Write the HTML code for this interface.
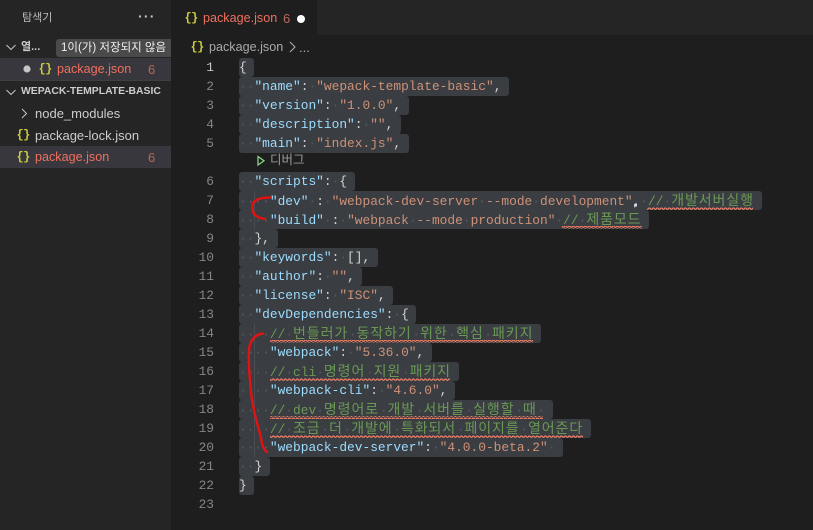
<!DOCTYPE html>
<html lang="ko"><head><meta charset="utf-8"><title>package.json</title>
<style>
html,body{margin:0;padding:0;width:813px;height:530px;overflow:hidden;background:#1e1e1e}
body{position:relative;font-family:"Liberation Sans","Noto Sans CJK KR",sans-serif;font-size:13px;color:#cccccc}
.a{position:absolute;white-space:nowrap}
.rect{position:absolute}
.ic{position:absolute;font:bold 12px/14px "Liberation Mono",monospace;color:#cbcb41;white-space:pre;letter-spacing:-.6px}
.err{color:#f0705f}
.pk{font-size:12.6px}
.num{color:#b8685a}
.ln{position:absolute;width:30px;left:184px;text-align:right;font:12.87px/19px "Liberation Mono",monospace;color:#858585}
.l{position:absolute;left:239px;height:19px;font:12.87px/19px "Liberation Mono","Noto Sans CJK KR",monospace;white-space:pre;color:#d4d4d4}
.l>span.s{display:inline-block;height:19px;background:#3a3d41;padding-right:7.7px;border-radius:3px;vertical-align:top}
i{font-style:normal;color:#565a5f}
b{font-weight:normal;color:#9cdcfe}
u{text-decoration:none;color:#ce9178}
em{font-style:normal;color:#6a9955}
.k{font-family:"Noto Sans CJK KR",sans-serif;font-size:14px;letter-spacing:.9px;line-height:19px}
.k+i{margin-left:.7px}
</style></head><body>
<div class="rect" style="left:0;top:0;width:171px;height:530px;background:#252526"></div>
<div class="rect" style="left:171px;top:0;width:642px;height:35px;background:#252526"></div>
<div class="rect" style="left:171px;top:0;width:146px;height:35px;background:#1e1e1e"></div>

<div class="a" style="left:22px;top:10px;font-size:11px;line-height:16px;color:#bbbbbb">탐색기</div>
<div class="a" style="left:138px;top:6px;font-size:14px;line-height:20px;color:#c5c5c5;letter-spacing:1.2px;font-weight:bold">···</div>

<div class="rect" style="left:0;top:58px;width:171px;height:22px;background:#37373d"></div>
<div class="rect" style="left:0;top:80px;width:171px;height:1px;background:#3f3f42"></div>
<div class="rect" style="left:0;top:146px;width:171px;height:22px;background:#37373d"></div>

<svg class="rect" style="left:0;top:0" width="171" height="170" fill="none" stroke="#c5c5c5" stroke-width="1">
<path d="M6.500 45l4.500 4.500 4.500-4.500"/>
<path d="M6.500 90l4.500 4.500 4.500-4.500"/>
<path d="M22 109l4.500 4.500-4.500 4.500"/>
<circle cx="27" cy="69" r="3.600" fill="#c5c5c5" stroke="none"/>
</svg>

<div class="a" style="left:21px;top:39px;font-size:11px;font-weight:bold;line-height:16px;color:#cccccc">열...</div>
<div class="rect" style="left:56px;top:39px;width:115px;height:18px;background:#4a4a4b;border-radius:3px 0 0 3px"></div>
<div class="a" style="left:61px;top:40px;font-size:11.5px;line-height:16px;color:#f0f0f0">1이(가) 저장되지 않음</div>

<div class="ic" style="left:38.500px;top:62px">{}</div>
<div class="a err pk" style="left:57px;top:61px;line-height:17px">package.json</div>
<div class="a num" style="left:148px;top:61px;line-height:17px">6</div>

<div class="a" style="left:21px;top:84px;font-size:10.4px;font-weight:bold;line-height:16px;color:#cccccc">WEPACK-TEMPLATE-BASIC</div>
<div class="a" style="left:35px;top:105px;line-height:17px">node_modules</div>
<div class="ic" style="left:16.500px;top:128px">{}</div>
<div class="a" style="left:35px;top:127px;line-height:17px">package-lock.json</div>
<div class="ic" style="left:16.500px;top:150px">{}</div>
<div class="a err pk" style="left:35px;top:149px;line-height:17px">package.json</div>
<div class="a num" style="left:148px;top:149px;line-height:17px">6</div>

<div class="ic" style="left:184.500px;top:11px">{}</div>
<div class="a err pk" style="left:203px;top:10px;line-height:17px">package.json</div>
<div class="a num" style="left:283px;top:10px;line-height:17px">6</div>
<div class="rect" style="left:297px;top:15px;width:8px;height:8px;border-radius:50%;background:#ffffff"></div>

<div class="ic" style="left:190.500px;top:40px">{}</div>
<div class="a pk" style="left:209px;top:39px;line-height:17px;color:#a9a9a9">package.json</div>
<svg class="rect" style="left:288px;top:41px" width="10" height="12" fill="none" stroke="#a9a9a9" stroke-width="1.100"><path d="M2 1l5 5-5 5"/></svg>
<div class="a" style="left:299px;top:39px;line-height:17px;color:#a9a9a9">...</div>

<div class="ln" style="top:58px;color:#c6c6c6">1</div>
<div class="ln" style="top:77px">2</div>
<div class="ln" style="top:96px">3</div>
<div class="ln" style="top:115px">4</div>
<div class="ln" style="top:134px">5</div>
<div class="ln" style="top:172px">6</div>
<div class="ln" style="top:191px">7</div>
<div class="ln" style="top:210px">8</div>
<div class="ln" style="top:229px">9</div>
<div class="ln" style="top:248px">10</div>
<div class="ln" style="top:267px">11</div>
<div class="ln" style="top:286px">12</div>
<div class="ln" style="top:305px">13</div>
<div class="ln" style="top:324px">14</div>
<div class="ln" style="top:343px">15</div>
<div class="ln" style="top:362px">16</div>
<div class="ln" style="top:381px">17</div>
<div class="ln" style="top:400px">18</div>
<div class="ln" style="top:419px">19</div>
<div class="ln" style="top:438px">20</div>
<div class="ln" style="top:457px">21</div>
<div class="ln" style="top:476px">22</div>
<div class="ln" style="top:495px">23</div>

<div class="l" style="top:58px"><span class="s">{</span></div>
<div class="l" style="top:77px"><span class="s"><i>··</i><b>"name"</b>:<i>·</i><u>"wepack-template-basic"</u>,</span></div>
<div class="l" style="top:96px"><span class="s"><i>··</i><b>"version"</b>:<i>·</i><u>"1.0.0"</u>,</span></div>
<div class="l" style="top:115px"><span class="s"><i>··</i><b>"description"</b>:<i>·</i><u>""</u>,</span></div>
<div class="l" style="top:134px"><span class="s"><i>··</i><b>"main"</b>:<i>·</i><u>"index.js"</u>,</span></div>

<svg class="rect" style="left:256px;top:155px" width="10" height="12" fill="none" stroke="#89d185" stroke-width="1.300"><path d="M2 1.500v8.500l6-4.200z"/></svg>
<div class="a" style="left:270px;top:152px;font-size:12.500px;line-height:16px;color:#999999">디버그</div>

<div class="l" style="top:172px"><span class="s"><i>··</i><b>"scripts"</b>:<i>·</i>{</span></div>
<div class="l" style="top:191px"><span class="s"><i>····</i><b>"dev"</b><i>·</i>:<i>·</i><u>"webpack-dev-server<i>·</i>--mode<i>·</i>development"</u>,<i>·</i><em>//<i>·</i><span class="k">개발서버실행</span></em></span></div>
<div class="l" style="top:210px"><span class="s"><i>····</i><b>"build"</b><i>·</i>:<i>·</i><u>"webpack<i>·</i>--mode<i>·</i>production"</u><i>·</i><em>//<i>·</i><span class="k">제품모드</span></em></span></div>
<div class="l" style="top:229px"><span class="s"><i>··</i>},</span></div>
<div class="l" style="top:248px"><span class="s"><i>··</i><b>"keywords"</b>:<i>·</i>[],</span></div>
<div class="l" style="top:267px"><span class="s"><i>··</i><b>"author"</b>:<i>·</i><u>""</u>,</span></div>
<div class="l" style="top:286px"><span class="s"><i>··</i><b>"license"</b>:<i>·</i><u>"ISC"</u>,</span></div>
<div class="l" style="top:305px"><span class="s"><i>··</i><b>"devDependencies"</b>:<i>·</i>{</span></div>
<div class="l" style="top:324px"><span class="s"><i>····</i><em>//<i>·</i><span class="k">번들러가</span><i>·</i><span class="k">동작하기</span><i>·</i><span class="k">위한</span><i>·</i><span class="k">핵심</span><i>·</i><span class="k">패키지</span></em></span></div>
<div class="l" style="top:343px"><span class="s"><i>····</i><b>"webpack"</b>:<i>·</i><u>"5.36.0"</u>,</span></div>
<div class="l" style="top:362px"><span class="s"><i>····</i><em>//<i>·</i>cli<i>·</i><span class="k">명령어</span><i>·</i><span class="k">지원</span><i>·</i><span class="k">패키지</span></em></span></div>
<div class="l" style="top:381px"><span class="s"><i>····</i><b>"webpack-cli"</b>:<i>·</i><u>"4.6.0"</u>,</span></div>
<div class="l" style="top:400px"><span class="s"><i>····</i><em>//<i>·</i>dev<i>·</i><span class="k">명령어로</span><i>·</i><span class="k">개발</span><i>·</i><span class="k">서버를</span><i>·</i><span class="k">실행할</span><i>·</i><span class="k">때</span><i>·</i></em></span></div>
<div class="l" style="top:419px"><span class="s"><i>····</i><em>//<i>·</i><span class="k">조금</span><i>·</i><span class="k">더</span><i>·</i><span class="k">개발에</span><i>·</i><span class="k">특화되서</span><i>·</i><span class="k">페이지를</span><i>·</i><span class="k">열어준다</span></em></span></div>
<div class="l" style="top:438px"><span class="s"><i>····</i><b>"webpack-dev-server"</b>:<i>·</i><u>"4.0.0-beta.2"</u><i>·</i></span></div>
<div class="l" style="top:457px"><span class="s"><i>··</i>}</span></div>
<div class="l" style="top:476px"><span class="s">}</span></div>

<svg class="rect" style="left:0;top:0" width="813" height="530" fill="none">
<defs><pattern id="w" width="4" height="3" patternUnits="userSpaceOnUse"><path d="M0 2.400Q1 .2 2 1.300T4 2.400" stroke="#f0806a" stroke-width="1.200" fill="none"/></pattern></defs>
<g stroke="#4a4d52" stroke-width="1"><path d="M254.500 191v38M254.500 324v133"/></g>
<g fill="url(#w)">
<rect x="647" y="207" width="106" height="3"/>
<rect x="562" y="226" width="80" height="3"/>
<rect x="270" y="340" width="263" height="3"/>
<rect x="270" y="378" width="180" height="3"/>
<rect x="270" y="416" width="273" height="3"/>
<rect x="270" y="435" width="313" height="3"/>
</g>
<rect x="634" y="204" width="3" height="2.500" fill="#c9d6ee"/>
<path d="M270 197.500C262 197.500 254 199 252.500 205C251.500 212 254 217.500 265 219" stroke="#e31212" stroke-width="2.400" stroke-linecap="round"/>
<path d="M263 333.500C256 334.500 250 339 249 350C248 365 250 380 251 392C253 412 258 425 261 438C262 446 264 450 267 452" stroke="#e31212" stroke-width="2.400" stroke-linecap="round"/>
</svg>
</body></html>
